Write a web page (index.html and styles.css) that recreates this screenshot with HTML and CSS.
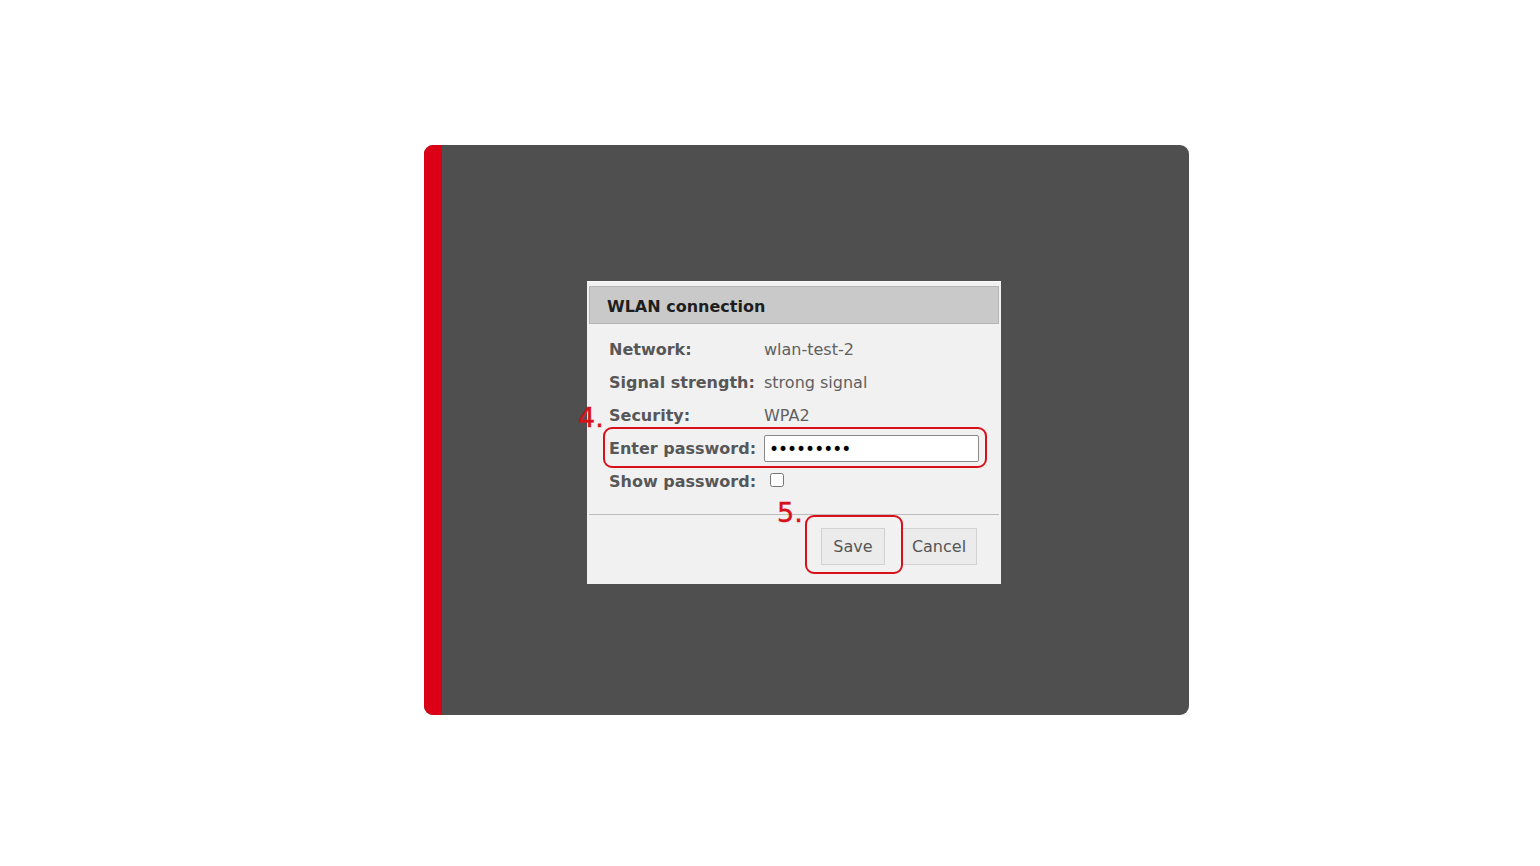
FILE: index.html
```html
<!DOCTYPE html>
<html lang="en">

<head>
    <meta charset="UTF-8">
    <meta name="viewport" content="width=device-width, initial-scale=1.0">
    <title>WLAN connection</title>

    <link rel="stylesheet" href="styles.css">
</head>

<body>
    <div class="screen">
        <div class="stripe"></div>
        <div class="desk">
            <div class="dialog">
                <div class="dialog-title">WLAN connection</div>
                <div class="dialog-body">
                    <div class="row">
                        <span class="label">Network:</span>
                        <span class="value">wlan-test-2</span>
                    </div>
                    <div class="row">
                        <span class="label">Signal strength:</span>
                        <span class="value">strong signal</span>
                    </div>
                    <div class="row">
                        <span class="label">Security:</span>
                        <span class="value">WPA2</span>
                    </div>
                    <div class="row">
                        <span class="label">Enter password:</span>
                        <input class="pwd" type="password" value="secret123">
                    </div>
                    <div class="row">
                        <span class="label">Show password:</span>
                        <input class="check" type="checkbox">
                    </div>
                </div>
                <div class="dialog-foot">
                    <button class="btn btn-save">Save</button>
                    <button class="btn btn-cancel">Cancel</button>
                </div>

                <!-- step marks -->
                <span class="step step-4">4.</span>
                <span class="mark mark-pwd"></span>
                <span class="step step-5">5.</span>
                <span class="mark mark-save"></span>
            </div>
        </div>
    </div>
</body>

</html>
```

FILE: styles.css
```css
* {
    margin: 0;
    padding: 0;
    box-sizing: border-box;
}

body {
    background-color: #fff;
    font-family: "DejaVu Sans", Verdana, sans-serif;
}

.screen {
    display: flex;
    width: 765px;
    height: 570px;
    margin: 145px 0 0 424px;
    border-radius: 9px;
    overflow: hidden;
    background-color: #4f4f4f;
}

.stripe {
    width: 18px;
    background-color: #dc0016;
}

.desk {
    flex: 1;
    padding: 136px 0 0 145px;
}

.dialog {
    position: relative;
    width: 414px;
    height: 303px;
    padding: 4px 2px 0;
    background-color: #f1f1f1;
    border-top: 1px solid #fafafa;
}

.dialog-title {
    height: 38px;
    padding-left: 17px;
    line-height: 39px;
    font-size: 16px;
    font-weight: bold;
    color: #1e1e1e;
    background-color: #c9c9c9;
    border: 1px solid #b4b4b4;
}

.dialog-body {
    padding: 9px 0 0 20px;
    height: 191px;
    border-bottom: 1px solid #bdbdbd;
}

.row {
    display: flex;
    align-items: center;
    height: 33px;
}

.label {
    width: 155px;
    font-size: 16px;
    font-weight: bold;
    color: #575757;
}

.value {
    font-size: 16px;
    color: #606060;
}

.pwd {
    width: 215px;
    height: 27px;
    padding: 0 4px;
    font-family: "DejaVu Sans", sans-serif;
    font-size: 17px;
    letter-spacing: -1px;
    color: #000;
    background-color: #fff;
    border: 1px solid #8a8a8a;
    border-radius: 2px;
}

.check {
    width: 14px;
    height: 14px;
    margin: -4px 0 0 6px;
}

.dialog-foot {
    display: flex;
    justify-content: flex-end;
    gap: 16px;
    padding: 13px 22px 0 0;
}

.btn {
    height: 37px;
    font-family: "DejaVu Sans", sans-serif;
    font-size: 16px;
    color: #555;
    background-color: #ebebeb;
    border: 1px solid #d2d2d2;
}

.btn-save {
    width: 64px;
}

.btn-cancel {
    width: 76px;
}

.step {
    position: absolute;
    font-size: 27px;
    line-height: 1;
    color: #d8101a;
    -webkit-text-stroke: 0.4px #d8101a;
}

.step-4 {
    left: -9px;
    top: 122px;
}

.step-5 {
    left: 190px;
    top: 217px;
}

.mark {
    position: absolute;
    border: 2px solid #d8101a;
    border-radius: 9px;
}

.mark-pwd {
    left: 16px;
    top: 145px;
    width: 384px;
    height: 41px;
}

.mark-save {
    left: 218px;
    top: 233px;
    width: 98px;
    height: 59px;
}
```
